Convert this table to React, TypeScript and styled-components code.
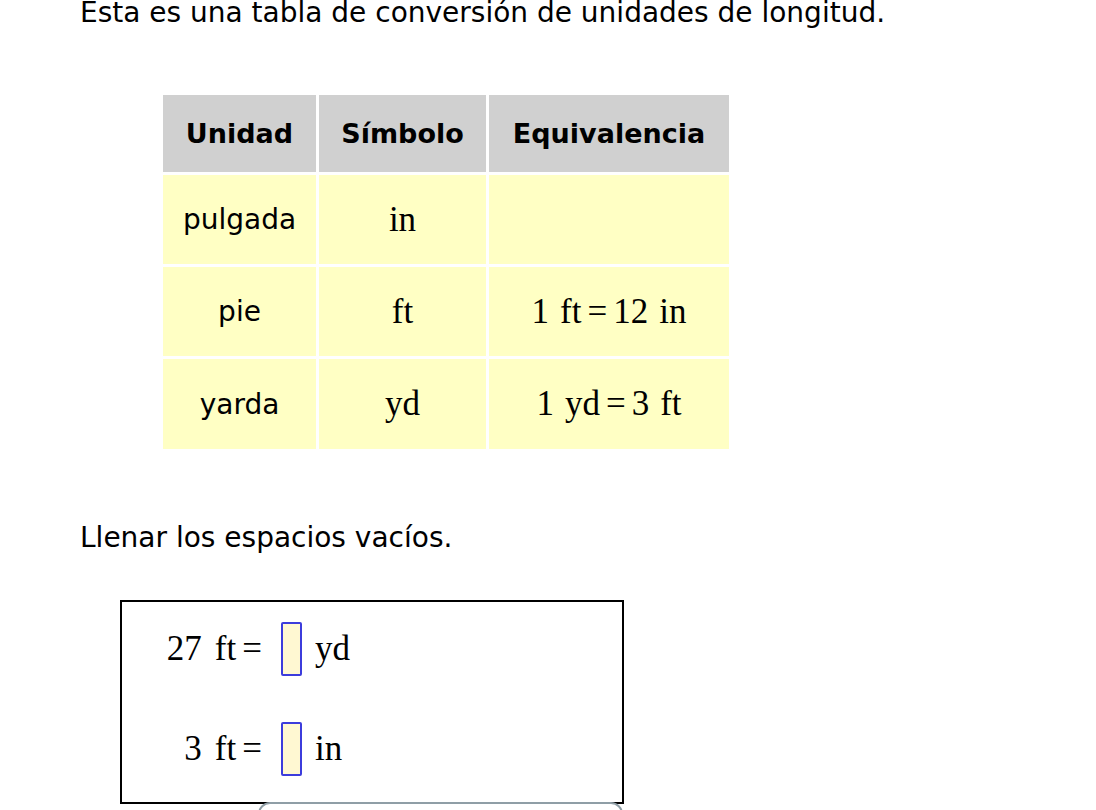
import React from "react";
import styled, { createGlobalStyle } from "styled-components";

const GlobalStyle = createGlobalStyle`
  body {
    margin: 0;
    background: #ffffff;
    font-family: "DejaVu Sans", Verdana, sans-serif;
    color: #000;
  }
`;

const Page = styled.div`
  padding-left: 80px;
  width: 1016px;
  height: 810px;
  overflow: hidden;
`;

const Intro = styled.p`
  font-size: 28px;
  line-height: 34px;
  margin: -4px 0 0;
`;

const Table = styled.table`
  border-collapse: separate;
  border-spacing: 3px;
  margin: 62px 0 0 80px;
`;

const HeadCell = styled.th<{ $w: number }>`
  width: ${(p) => p.$w}px;
  height: 77px;
  padding: 0;
  background: #d0d0d0;
  font-size: 27px;
  font-weight: bold;
  text-align: center;
`;

const Cell = styled.td<{ $h: number }>`
  height: ${(p) => p.$h}px;
  padding: 0;
  background: #ffffc4;
  font-size: 28px;
  text-align: center;
`;

const MathText = styled.span`
  font-family: "Liberation Serif", "Times New Roman", serif;
  font-size: 35px;
  white-space: nowrap;
`;

const Gap = styled.span<{ $w: number }>`
  display: inline-block;
  width: ${(p) => p.$w}px;
`;

const Prompt = styled.p`
  font-size: 28px;
  line-height: 34px;
  margin: 69px 0 0;
`;

const ExerciseBox = styled.div`
  margin: 45px 0 0 40px;
  width: 504px;
  height: 204px;
  box-sizing: border-box;
  border: 2px solid #000;
  padding-top: 20px;
  display: grid;
  grid-template-columns: 159px 20px auto;
  grid-auto-rows: 53px;
  row-gap: 47px;
  align-items: center;
`;

const Lhs = styled(MathText)`
  text-align: right;
  padding-right: 19px;
`;

const AnswerInput = styled.input`
  width: 21px;
  height: 54px;
  box-sizing: border-box;
  border: 2px solid #3c3cdc;
  border-radius: 2px;
  background: #fff8d2;
  padding: 0;
  margin: 0;
  outline: none;
`;

const Unit = styled(MathText)`
  padding-left: 14px;
`;

const CheckButton = styled.button`
  display: block;
  margin: -2px 0 0 178px;
  width: 365px;
  height: 44px;
  border: 2px solid #8f9ea6;
  border-radius: 12px;
  background: #fff;
`;

const Eq: React.FC<{ a: string; ua: string; b: string; ub: string }> = ({ a, ua, b, ub }) => (
  <MathText>
    {a}
    <Gap $w={11} />
    {ua}
    <Gap $w={6} />=<Gap $w={6} />
    {b}
    <Gap $w={11} />
    {ub}
  </MathText>
);

const rows = [
  { unit: "pulgada", sym: "in", eq: null, h: 89 },
  { unit: "pie", sym: "ft", eq: { a: "1", ua: "ft", b: "12", ub: "in" }, h: 89 },
  { unit: "yarda", sym: "yd", eq: { a: "1", ua: "yd", b: "3", ub: "ft" }, h: 90 },
];

const exercises = [
  { value: "27", from: "ft", to: "yd" },
  { value: "3", from: "ft", to: "in" },
];

const App: React.FC = () => {
  return (
    <Page>
      <GlobalStyle />
      <Intro>Esta es una tabla de conversión de unidades de longitud.</Intro>
      <Table>
        <thead>
          <tr>
            <HeadCell $w={153}>Unidad</HeadCell>
            <HeadCell $w={167}>Símbolo</HeadCell>
            <HeadCell $w={240}>Equivalencia</HeadCell>
          </tr>
        </thead>
        <tbody>
          {rows.map((r) => (
            <tr key={r.unit}>
              <Cell $h={r.h}>{r.unit}</Cell>
              <Cell $h={r.h}>
                <MathText>{r.sym}</MathText>
              </Cell>
              <Cell $h={r.h}>{r.eq && <Eq {...r.eq} />}</Cell>
            </tr>
          ))}
        </tbody>
      </Table>
      <Prompt>Llenar los espacios vacíos.</Prompt>
      <ExerciseBox>
        {exercises.map((e) => (
          <React.Fragment key={e.value}>
            <Lhs>
              {e.value}
              <Gap $w={13} />
              {e.from}
              <Gap $w={6} />=
            </Lhs>
            <AnswerInput aria-label={`${e.value} ${e.from} en ${e.to}`} />
            <Unit>{e.to}</Unit>
          </React.Fragment>
        ))}
      </ExerciseBox>
      <CheckButton aria-label="Comprobar" />
    </Page>
  );
};

export default App;
